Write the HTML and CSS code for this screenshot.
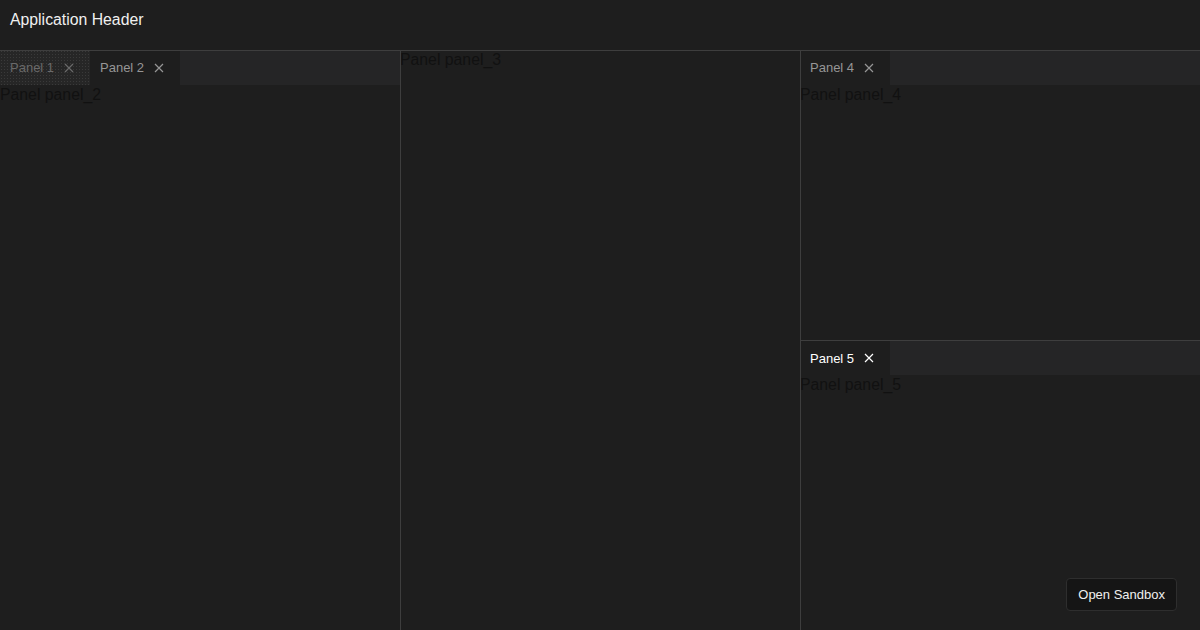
FILE: index.html
```html
<!DOCTYPE html>
<html lang="en">
<head>
    <meta charset="UTF-8">
    <title>Dock Layout</title>
    <link rel="stylesheet" href="styles.css">
</head>
<body>
    <!-- Header -->
    <header class="app-header">Application Header</header>

    <!-- Dock -->
    <main class="dock">
        <section class="column">
            <div class="group">
                <div class="tabs">
                    <div class="tab dragging">Panel 1
                        <svg class="close" viewBox="0 0 10 10"><path d="M1 1L9 9M9 1L1 9"/></svg>
                    </div>
                    <div class="tab">Panel 2
                        <svg class="close" viewBox="0 0 10 10"><path d="M1 1L9 9M9 1L1 9"/></svg>
                    </div>
                    <div class="tabs-fill"></div>
                </div>
                <div class="content">Panel panel_2</div>
            </div>
        </section>

        <section class="column">
            <div class="group">
                <div class="content">Panel panel_3</div>
            </div>
        </section>

        <section class="column split">
            <div class="group">
                <div class="tabs">
                    <div class="tab">Panel 4
                        <svg class="close" viewBox="0 0 10 10"><path d="M1 1L9 9M9 1L1 9"/></svg>
                    </div>
                    <div class="tabs-fill"></div>
                </div>
                <div class="content">Panel panel_4</div>
            </div>
            <div class="group">
                <div class="tabs">
                    <div class="tab focused">Panel 5
                        <svg class="close" viewBox="0 0 10 10"><path d="M1 1L9 9M9 1L1 9"/></svg>
                    </div>
                    <div class="tabs-fill"></div>
                </div>
                <div class="content">Panel panel_5</div>
            </div>
        </section>
    </main>

    <button class="sandbox-btn">Open Sandbox</button>
</body>
</html>
```
FILE: styles.css
```css
/* Base */
body {
    margin: 0;
    height: 100vh;
    display: flex;
    flex-direction: column;
    background-color: #1e1e1e;
    font-family: 'Liberation Sans', Arial, sans-serif;
    overflow: hidden;
}

/* Header */
.app-header {
    position: relative;
    z-index: 3;
    height: 50px;
    box-sizing: border-box;
    padding: 10px 10px 0;
    font-size: 15.8px;
    line-height: 19px;
    color: #f0f0f0;
    box-shadow: 0 1px 0 #3e3e3e;
    flex-shrink: 0;
}

/* Dock */
.dock {
    flex: 1;
    display: grid;
    grid-template-columns: 400px 400px 1fr;
    min-height: 0;
}

.column {
    position: relative;
    display: flex;
    flex-direction: column;
    min-height: 0;
}

/* sash line drawn over the panel edge */
.column + .column::before {
    content: '';
    position: absolute;
    top: 0;
    bottom: 0;
    left: 0;
    width: 1px;
    background-color: #3e3e3e;
    z-index: 2;
}

.group {
    flex: 1;
    display: flex;
    flex-direction: column;
    min-height: 0;
}

.split .group:first-child {
    flex: 0 0 290px;
}

.split .group:last-child .tabs {
    border-top: 1px solid #3e3e3e;
}

/* Tabs */
.tabs {
    height: 35px;
    box-sizing: border-box;
    display: flex;
    flex-shrink: 0;
}

.tab {
    width: 90px;
    box-sizing: border-box;
    padding: 0 16px 0 10px;
    display: flex;
    align-items: center;
    justify-content: space-between;
    font-size: 13px;
    color: #969696;
    background-color: #1e1e1e;
}

.tab .close {
    width: 10px;
    height: 10px;
    stroke: currentColor;
    stroke-width: 1.2;
    fill: none;
}

.tab.focused {
    color: #ffffff;
}

.tab.dragging {
    color: #6a6a6a;
    background-color: #262626;
    background-image: radial-gradient(#3a3a3a 0.7px, transparent 0.8px);
    background-size: 3px 3px;
}

.tabs-fill {
    flex: 1;
    background-color: #252526;
}

/* Content */
.content {
    flex: 1;
    padding-top: 1px;
    font-size: 15.8px;
    line-height: 18px;
    color: #111111;
}

/* Sandbox button */
.sandbox-btn {
    position: fixed;
    right: 23px;
    bottom: 19px;
    height: 33px;
    padding: 0 11px;
    font-family: 'Liberation Sans', Arial, sans-serif;
    font-size: 13px;
    color: #f0f0f0;
    background-color: #151515;
    border: 1px solid #2e2e2e;
    border-radius: 4px;
}
```
